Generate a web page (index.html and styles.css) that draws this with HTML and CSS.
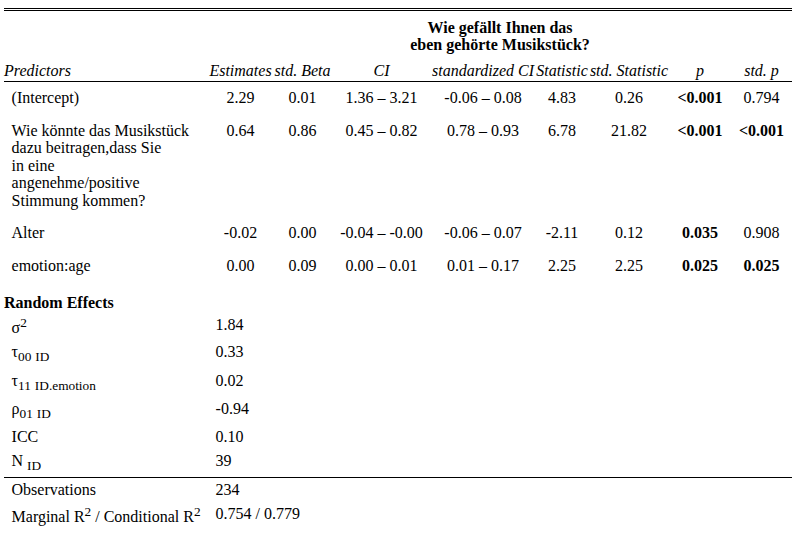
FILE: index.html
```html
<!DOCTYPE html>
<html lang="de">
<head>
<meta charset="utf-8">
<title>Model table</title>
<link rel="stylesheet" href="styles.css">
</head>
<body>
<table class="model">
  <colgroup>
    <col class="c-pred">
    <col class="c-est">
    <col class="c-beta">
    <col class="c-ci">
    <col class="c-sci">
    <col class="c-stat">
    <col class="c-sstat">
    <col class="c-p">
    <col class="c-sp">
  </colgroup>
  <thead>
    <tr class="depvar-row">
      <th class="depvar-empty"></th>
      <th class="depvar" colspan="8">Wie gefällt Ihnen das<br>eben gehörte Musikstück?</th>
    </tr>
    <tr class="colhead-row">
      <th class="colhead left">Predictors</th>
      <th class="colhead">Estimates</th>
      <th class="colhead">std. Beta</th>
      <th class="colhead">CI</th>
      <th class="colhead">standardized CI</th>
      <th class="colhead">Statistic</th>
      <th class="colhead">std. Statistic</th>
      <th class="colhead">p</th>
      <th class="colhead">std. p</th>
    </tr>
  </thead>
  <tbody>
    <tr class="first-row">
      <td class="cell left">(Intercept)</td>
      <td class="cell">2.29</td>
      <td class="cell">0.01</td>
      <td class="cell">1.36&nbsp;–&nbsp;3.21</td>
      <td class="cell">-0.06&nbsp;–&nbsp;0.08</td>
      <td class="cell">4.83</td>
      <td class="cell">0.26</td>
      <td class="cell"><strong>&lt;0.001</strong></td>
      <td class="cell">0.794</td>
    </tr>
    <tr>
      <td class="cell left">Wie könnte das Musikstück<br>dazu beitragen,dass Sie<br>in eine<br>angenehme/positive<br>Stimmung kommen?</td>
      <td class="cell">0.64</td>
      <td class="cell">0.86</td>
      <td class="cell">0.45&nbsp;–&nbsp;0.82</td>
      <td class="cell">0.78&nbsp;–&nbsp;0.93</td>
      <td class="cell">6.78</td>
      <td class="cell">21.82</td>
      <td class="cell"><strong>&lt;0.001</strong></td>
      <td class="cell"><strong>&lt;0.001</strong></td>
    </tr>
    <tr>
      <td class="cell left">Alter</td>
      <td class="cell">-0.02</td>
      <td class="cell">0.00</td>
      <td class="cell">-0.04&nbsp;–&nbsp;-0.00</td>
      <td class="cell">-0.06&nbsp;–&nbsp;0.07</td>
      <td class="cell">-2.11</td>
      <td class="cell">0.12</td>
      <td class="cell"><strong>0.035</strong></td>
      <td class="cell">0.908</td>
    </tr>
    <tr>
      <td class="cell left">emotion:age</td>
      <td class="cell">0.00</td>
      <td class="cell">0.09</td>
      <td class="cell">0.00&nbsp;–&nbsp;0.01</td>
      <td class="cell">0.01&nbsp;–&nbsp;0.17</td>
      <td class="cell">2.25</td>
      <td class="cell">2.25</td>
      <td class="cell"><strong>0.025</strong></td>
      <td class="cell"><strong>0.025</strong></td>
    </tr>
    <tr>
      <td class="random-head" colspan="9">Random Effects</td>
    </tr>
    <tr>
      <td class="sum left">σ<sup>2</sup></td>
      <td class="sum sumdata" colspan="8">1.84</td>
    </tr>
    <tr>
      <td class="sum left">τ<sub>00</sub> <sub>ID</sub></td>
      <td class="sum sumdata" colspan="8">0.33</td>
    </tr>
    <tr>
      <td class="sum left">τ<sub>11</sub> <sub>ID.emotion</sub></td>
      <td class="sum sumdata" colspan="8">0.02</td>
    </tr>
    <tr>
      <td class="sum left">ρ<sub>01</sub> <sub>ID</sub></td>
      <td class="sum sumdata" colspan="8">-0.94</td>
    </tr>
    <tr>
      <td class="sum left">ICC</td>
      <td class="sum sumdata" colspan="8">0.10</td>
    </tr>
    <tr>
      <td class="sum left">N <sub>ID</sub></td>
      <td class="sum sumdata" colspan="8">39</td>
    </tr>
    <tr class="obs-row">
      <td class="sum left">Observations</td>
      <td class="sum sumdata" colspan="8">234</td>
    </tr>
    <tr class="last-row">
      <td class="sum left">Marginal R<sup>2</sup> / Conditional R<sup>2</sup></td>
      <td class="sum sumdata" colspan="8">0.754 / 0.779</td>
    </tr>
  </tbody>
</table>
</body>
</html>
```

FILE: styles.css
```css
html, body {
  background: #ffffff;
}

body {
  margin: 0;
  padding: 8px 0 0 4px;
  font-family: "Liberation Serif", "Times New Roman", serif;
  font-size: 16px;
  color: #000000;
}

.model {
  border-collapse: collapse;
  table-layout: fixed;
  width: 788px;
  line-height: 1.1;
}

.c-pred { width: 204px; }
.c-est { width: 65px; }
.c-beta { width: 59px; }
.c-ci { width: 99px; }
.c-sci { width: 104px; }
.c-stat { width: 54px; }
.c-sstat { width: 80px; }
.c-p { width: 62px; }
.c-sp { width: 61px; }

.depvar-row th {
  border-top: 3px double #000000;
}

.depvar {
  padding: 7.5px 0;
  font-weight: bold;
  text-align: center;
}

.colhead {
  padding: 1px 0;
  font-style: italic;
  font-weight: normal;
  text-align: center;
  white-space: nowrap;
  border-bottom: 1px solid #000000;
}

.left {
  text-align: left;
}

.cell {
  padding: 7.4px 7.56px;
  text-align: center;
  vertical-align: top;
  white-space: nowrap;
}

.cell.left {
  text-align: left;
}

.random-head {
  padding: 12.8px 0 1px 0;
  font-weight: bold;
  text-align: left;
}

.sum {
  padding: 3.15px 7.56px;
  text-align: left;
  vertical-align: top;
  white-space: nowrap;
}

.obs-row td {
  border-top: 1px solid #000000;
}
```
